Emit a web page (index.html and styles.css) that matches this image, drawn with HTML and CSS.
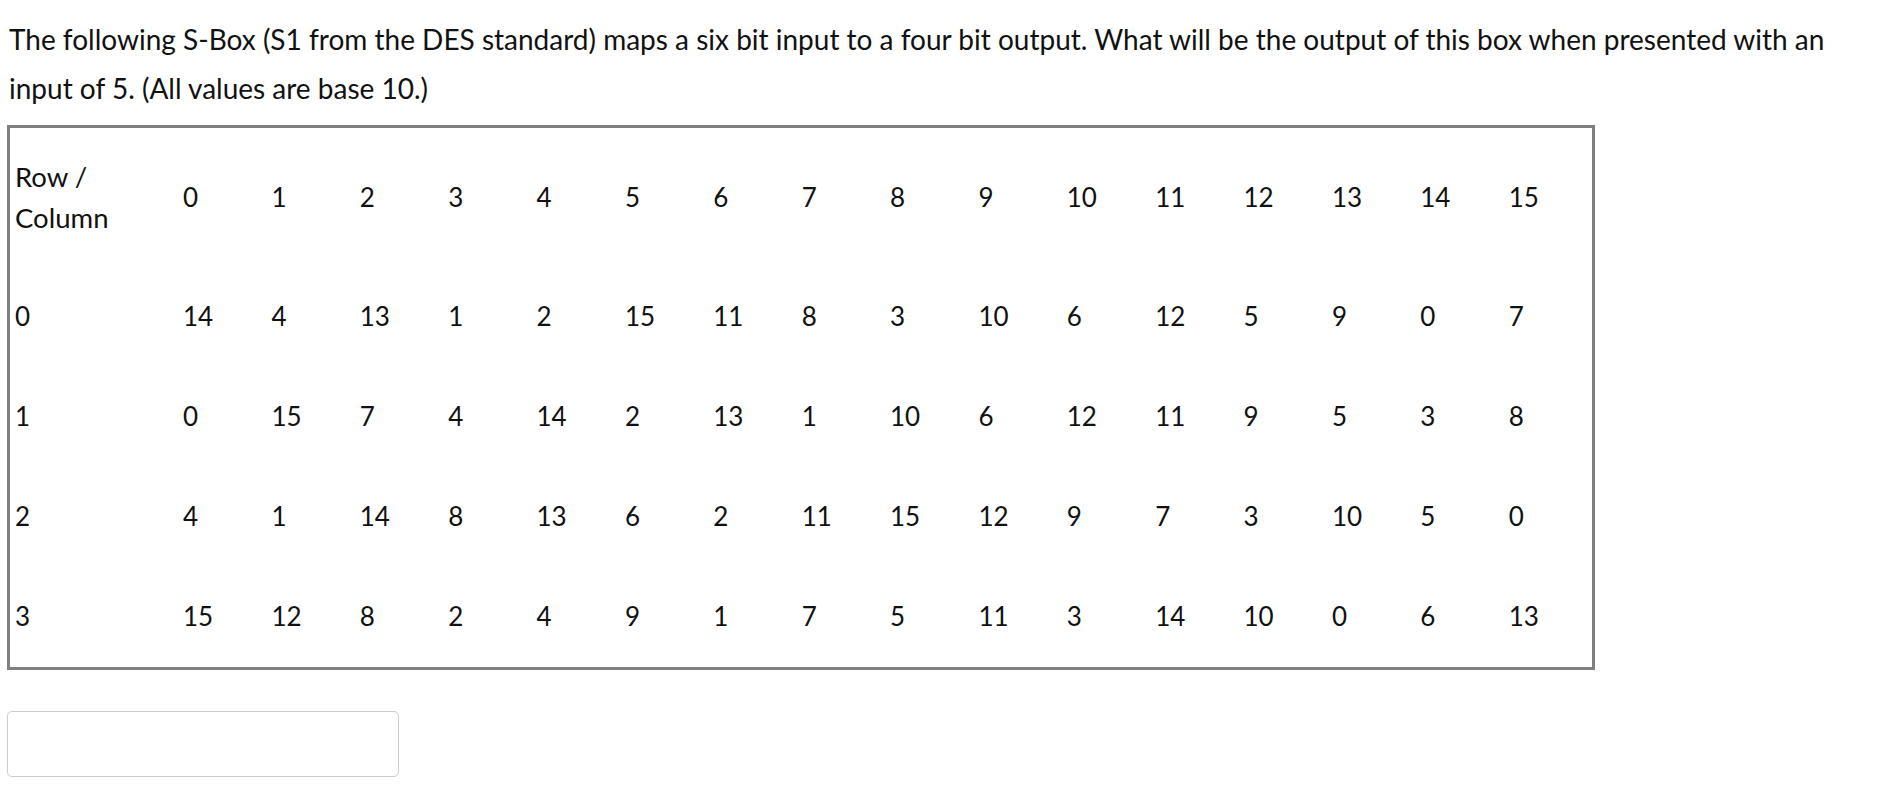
FILE: index.html
```html
<!DOCTYPE html>
<html lang="en">
<head>
<meta charset="utf-8">
<title>S-Box question</title>
<link rel="stylesheet" href="styles.css">
</head>
<body>
<div class="question">
  <p class="prompt">The following S-Box (S1 from the DES standard) maps a six bit input to a four bit output. What will be the output of this box when presented with an input of 5. (All values are base 10.)</p>
  <table class="sbox">
    <colgroup>
      <col class="label-col">
      <col span="16">
    </colgroup>
    <tbody>
      <tr class="head-row"><td class="corner">Row /<br>Column</td><td>0</td><td>1</td><td>2</td><td>3</td><td>4</td><td>5</td><td>6</td><td>7</td><td>8</td><td>9</td><td>10</td><td>11</td><td>12</td><td>13</td><td>14</td><td>15</td></tr>
      <tr><td>0</td><td>14</td><td>4</td><td>13</td><td>1</td><td>2</td><td>15</td><td>11</td><td>8</td><td>3</td><td>10</td><td>6</td><td>12</td><td>5</td><td>9</td><td>0</td><td>7</td></tr>
      <tr><td>1</td><td>0</td><td>15</td><td>7</td><td>4</td><td>14</td><td>2</td><td>13</td><td>1</td><td>10</td><td>6</td><td>12</td><td>11</td><td>9</td><td>5</td><td>3</td><td>8</td></tr>
      <tr><td>2</td><td>4</td><td>1</td><td>14</td><td>8</td><td>13</td><td>6</td><td>2</td><td>11</td><td>15</td><td>12</td><td>9</td><td>7</td><td>3</td><td>10</td><td>5</td><td>0</td></tr>
      <tr><td>3</td><td>15</td><td>12</td><td>8</td><td>2</td><td>4</td><td>9</td><td>1</td><td>7</td><td>5</td><td>11</td><td>3</td><td>14</td><td>10</td><td>0</td><td>6</td><td>13</td></tr>
    </tbody>
  </table>
  <input class="answer" type="text" aria-label="Answer">
</div>
</body>
</html>
```

FILE: styles.css
```css
html, body {
  margin: 0;
  padding: 0;
  background: #ffffff;
}

body {
  font-family: Lato, "Open Sans", "Liberation Sans", sans-serif;
  font-size: 24px;
  line-height: 1.7;
  color: #111111;
}

.question {
  padding: 0 7px;
}

.prompt {
  margin: 15px 0 12px 2px;
  font-size: 28px;
  line-height: 49px;
}

.sbox {
  width: 1588px;
  border: 3px solid #808080;
  border-collapse: separate;
  border-spacing: 0;
  table-layout: fixed;
  font-size: 26px;
  line-height: 41px;
}

.label-col {
  width: 168px;
}

.sbox td {
  padding: 29px 5px 30px 5px;
  text-align: left;
  vertical-align: middle;
  white-space: nowrap;
}

.sbox .head-row td {
  padding: 28px 5px 29px 5px;
}

.sbox .head-row .corner {
  font-size: 27.5px;
}

.answer {
  display: block;
  margin-top: 41px;
  width: 392px;
  height: 66px;
  box-sizing: border-box;
  border: 1px solid #cccccc;
  border-radius: 5px;
  background: #ffffff;
  font: inherit;
  padding: 0 10px;
}
```
